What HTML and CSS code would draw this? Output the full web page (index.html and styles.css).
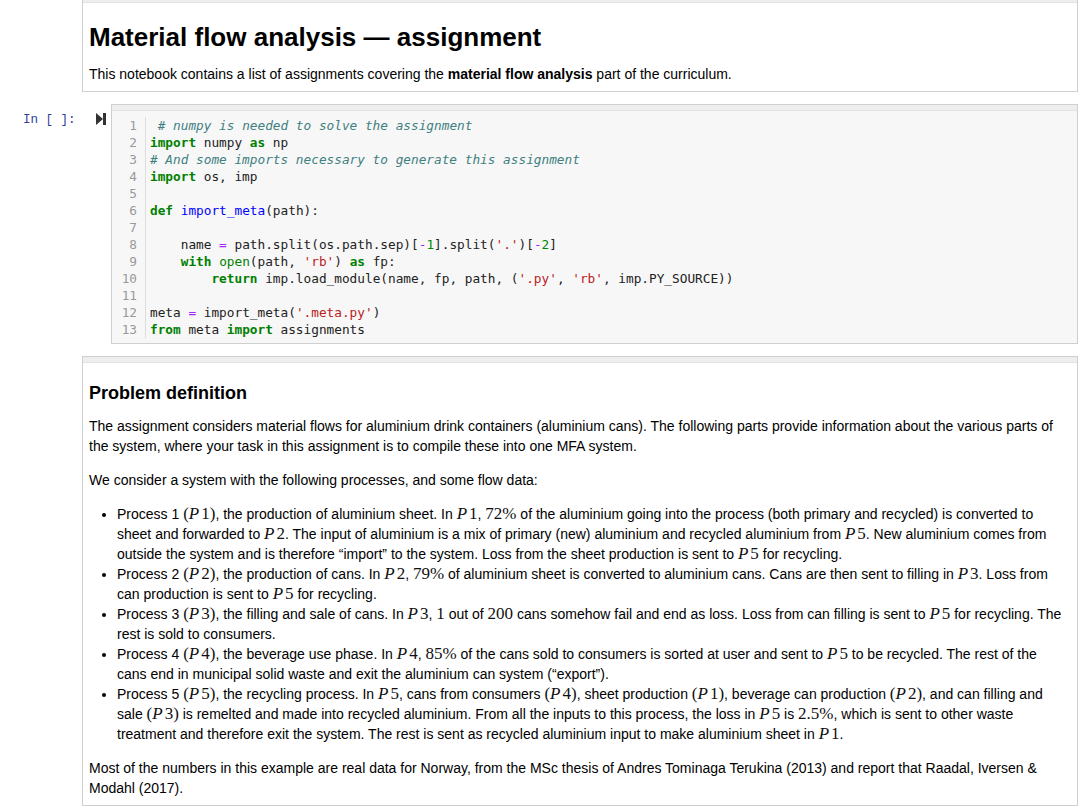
FILE: index.html
```html
<!DOCTYPE html>
<html>
<head>
<meta charset="utf-8">
<title>Material flow analysis — assignment</title>
<link rel="stylesheet" href="styles.css">
</head>
<body>
<div class="nb">

  <div class="cell md cell-first">
    <div class="band"></div>
    <div class="md-body">
      <h1>Material flow analysis — assignment</h1>
      <p>This notebook contains a list of assignments covering the <strong>material flow analysis</strong> part of the curriculum.</p>
    </div>
  </div>

  <div class="cell code-cell">
    <div class="prompt">
      <span class="ptxt">In&nbsp;[&nbsp;]:</span>
      <svg class="run" width="10" height="12" viewBox="0 0 10 12"><polygon points="0,0 7,6 0,12" fill="#333"/><rect x="7" y="0" width="3" height="12" fill="#333"/></svg>
    </div>
    <div class="input-area">
      <div class="band"></div>
      <div class="cm">
        <div class="gutter"><div>1</div><div>2</div><div>3</div><div>4</div><div>5</div><div>6</div><div>7</div><div>8</div><div>9</div><div>10</div><div>11</div><div>12</div><div>13</div></div>
<pre class="code"> <span class="c"># numpy is needed to solve the assignment</span>
<span class="k">import</span> numpy <span class="k">as</span> np
<span class="c"># And some imports necessary to generate this assignment</span>
<span class="k">import</span> os, imp

<span class="k">def</span> <span class="nf">import_meta</span>(path):

    name <span class="o">=</span> path.split(os.path.sep)[<span class="o">-</span><span class="n">1</span>].split(<span class="s">'.'</span>)[<span class="o">-</span><span class="n">2</span>]
    <span class="k">with</span> <span class="b">open</span>(path, <span class="s">'rb'</span>) <span class="k">as</span> fp:
        <span class="k">return</span> imp.load_module(name, fp, path, (<span class="s">'.py'</span>, <span class="s">'rb'</span>, imp.PY_SOURCE))

meta <span class="o">=</span> import_meta(<span class="s">'.meta.py'</span>)
<span class="k">from</span> meta <span class="k">import</span> assignments</pre>
      </div>
    </div>
  </div>

  <div class="cell md">
    <div class="band"></div>
    <div class="md-body">
      <h2>Problem definition</h2>
      <p>The assignment considers material flows for aluminium drink containers (aluminium cans). The following parts provide information about the various parts of the system, where your task in this assignment is to compile these into one MFA system.</p>
      <p>We consider a system with the following processes, and some flow data:</p>
      <ul>
        <li>Process 1 <span class="m">(<i>P</i>1)</span>, the production of aluminium sheet. In <span class="m"><i>P</i>1</span>, <span class="m">72%</span> of the aluminium going into the process (both primary and recycled) is converted to sheet and forwarded to <span class="m"><i>P</i>2</span>. The input of aluminium is a mix of primary (new) aluminium and recycled aluminium from <span class="m"><i>P</i>5</span>. New aluminium comes from outside the system and is therefore “import” to the system. Loss from the sheet production is sent to <span class="m"><i>P</i>5</span> for recycling.</li>
        <li>Process 2 <span class="m">(<i>P</i>2)</span>, the production of cans. In <span class="m"><i>P</i>2</span>, <span class="m">79%</span> of aluminium sheet is converted to aluminium cans. Cans are then sent to filling in <span class="m"><i>P</i>3</span>. Loss from can production is sent to <span class="m"><i>P</i>5</span> for recycling.</li>
        <li>Process 3 <span class="m">(<i>P</i>3)</span>, the filling and sale of cans. In <span class="m"><i>P</i>3</span>, <span class="m">1</span> out of <span class="m">200</span> cans somehow fail and end as loss. Loss from can filling is sent to <span class="m"><i>P</i>5</span> for recycling. The rest is sold to consumers.</li>
        <li>Process 4 <span class="m">(<i>P</i>4)</span>, the beverage use phase. In <span class="m"><i>P</i>4</span>, <span class="m">85%</span> of the cans sold to consumers is sorted at user and sent to <span class="m"><i>P</i>5</span> to be recycled. The rest of the cans end in municipal solid waste and exit the aluminium can system (“export”).</li>
        <li>Process 5 <span class="m">(<i>P</i>5)</span>, the recycling process. In <span class="m"><i>P</i>5</span>, cans from consumers <span class="m">(<i>P</i>4)</span>, sheet production <span class="m">(<i>P</i>1)</span>, beverage can production <span class="m">(<i>P</i>2)</span>, and can filling and sale <span class="m">(<i>P</i>3)</span> is remelted and made into recycled aluminium. From all the inputs to this process, the loss in <span class="m"><i>P</i>5</span> is <span class="m">2.5%</span>, which is sent to other waste treatment and therefore exit the system. The rest is sent as recycled aluminium input to make aluminium sheet in <span class="m"><i>P</i>1</span>.</li>
      </ul>
      <p>Most of the numbers in this example are real data for Norway, from the MSc thesis of Andres Tominaga Terukina (2013) and report that Raadal, Iversen &amp; Modahl (2017).</p>
    </div>
  </div>

</div>
</body>
</html>
```

FILE: styles.css
```css
html, body {
  margin: 0;
  padding: 0;
  background: #fff;
}

body {
  font-family: "Liberation Sans", Arial, sans-serif;
  font-size: 14px;
  line-height: 20px;
  color: #000;
  overflow: hidden;
}

.nb {
  padding-right: 14px;
}

.cell {
  margin-top: 12px;
}

.cell-first {
  margin-top: -4px;
}

.md {
  margin-left: 82px;
  border: 1px solid #cfcfcf;
}

.band {
  height: 5px;
  background: #eeeeee;
  border-bottom: 1px solid #e3e3e3;
}

.md-body {
  padding: 0 8px 7px 6px;
}

.md-body > :last-child {
  margin-bottom: 0;
}

h1 {
  font-size: 26px;
  line-height: 26px;
  font-weight: bold;
  margin: 21px 0 14px 0;
}

h2 {
  font-size: 18px;
  line-height: 18px;
  font-weight: bold;
  margin: 21px 0 14px 0;
}

p {
  margin: 0 0 14px 0;
}

ul {
  margin: 0 0 14px 0;
  padding-left: 28px;
}

.m {
  font-family: "Liberation Serif", "Times New Roman", serif;
  font-size: 17px;
  line-height: 1;
  color: #111;
}

.m i {
  font-style: italic;
  padding-right: 2px;
}

/* code cell */
.code-cell {
  display: flex;
  align-items: flex-start;
}

.prompt {
  width: 111px;
  flex: none;
  display: flex;
  align-items: flex-start;
  padding-top: 9px;
  box-sizing: border-box;
}

.ptxt {
  margin-left: 23px;
  width: 73px;
  font-family: "Liberation Mono", "DejaVu Sans Mono", monospace;
  font-size: 12.5px;
  line-height: 14px;
  color: #303f9f;
}

.run {
  display: block;
}

.input-area {
  flex: 1;
  border: 1px solid #cfcfcf;
  background: #f7f7f7;
}

.cm {
  display: flex;
  padding: 6px 0 5px 0;
}

.gutter {
  width: 25px;
  padding-right: 8px;
  border-right: 1px solid #dddddd;
  text-align: right;
  color: #999;
  font-family: "DejaVu Sans Mono", "Liberation Mono", monospace;
  font-size: 12.75px;
  line-height: 17px;
}

.code {
  margin: 0;
  padding-left: 4px;
  font-family: "DejaVu Sans Mono", "Liberation Mono", monospace;
  font-size: 12.75px;
  line-height: 17px;
  color: #222;
  white-space: pre;
}

.code .c { color: #408080; font-style: italic; }
.code .k { color: #008000; font-weight: bold; }
.code .b { color: #008000; }
.code .nf { color: #0000ff; }
.code .s { color: #ba2121; }
.code .o { color: #aa22ff; }
.code .n { color: #008800; }
```
